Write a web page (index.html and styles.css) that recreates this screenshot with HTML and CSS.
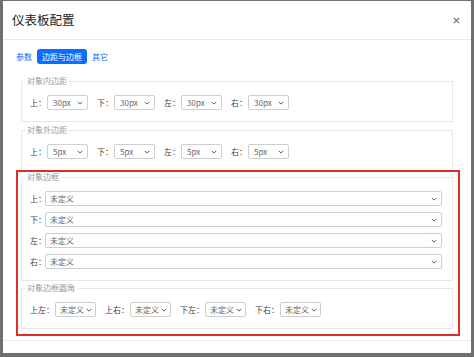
FILE: index.html
```html
<!DOCTYPE html>
<html lang="zh-CN">
<head>
    <meta charset="UTF-8">
    <title>仪表板配置</title>
    <link rel="stylesheet" href="styles.css">
</head>
<body>
    <div class="modal">
        <div class="modal-header">
            <span class="modal-title">仪表板配置</span>
            <span class="close">
                <svg viewBox="0 0 8 8" width="7" height="7"><path d="M1 1l6 6M7 1l-6 6" stroke="#666" stroke-width="1.2" fill="none"/></svg>
            </span>
        </div>
        <div class="modal-body">
            <div class="tabs">
                <a class="tab">参数</a>
                <a class="tab active">边距与边框</a>
                <a class="tab">其它</a>
            </div>

            <!-- 内边距 -->
            <fieldset class="group">
                <legend>对象内边距</legend>
                <div class="row">
                    <label>上：</label>
                    <div class="sel"><span>30px</span><svg viewBox="0 0 8 5" width="6" height="4"><path d="M1 1l3 3 3-3" fill="none" stroke="#555" stroke-width="1.3"/></svg></div>
                    <label>下：</label>
                    <div class="sel"><span>30px</span><svg viewBox="0 0 8 5" width="6" height="4"><path d="M1 1l3 3 3-3" fill="none" stroke="#555" stroke-width="1.3"/></svg></div>
                    <label>左：</label>
                    <div class="sel"><span>30px</span><svg viewBox="0 0 8 5" width="6" height="4"><path d="M1 1l3 3 3-3" fill="none" stroke="#555" stroke-width="1.3"/></svg></div>
                    <label>右：</label>
                    <div class="sel"><span>30px</span><svg viewBox="0 0 8 5" width="6" height="4"><path d="M1 1l3 3 3-3" fill="none" stroke="#555" stroke-width="1.3"/></svg></div>
                </div>
            </fieldset>

            <!-- 外边距 -->
            <fieldset class="group">
                <legend>对象外边距</legend>
                <div class="row">
                    <label>上：</label>
                    <div class="sel"><span>5px</span><svg viewBox="0 0 8 5" width="6" height="4"><path d="M1 1l3 3 3-3" fill="none" stroke="#555" stroke-width="1.3"/></svg></div>
                    <label>下：</label>
                    <div class="sel"><span>5px</span><svg viewBox="0 0 8 5" width="6" height="4"><path d="M1 1l3 3 3-3" fill="none" stroke="#555" stroke-width="1.3"/></svg></div>
                    <label>左：</label>
                    <div class="sel"><span>5px</span><svg viewBox="0 0 8 5" width="6" height="4"><path d="M1 1l3 3 3-3" fill="none" stroke="#555" stroke-width="1.3"/></svg></div>
                    <label>右：</label>
                    <div class="sel"><span>5px</span><svg viewBox="0 0 8 5" width="6" height="4"><path d="M1 1l3 3 3-3" fill="none" stroke="#555" stroke-width="1.3"/></svg></div>
                </div>
            </fieldset>

            <!-- 标红区域：边框 + 圆角 -->
            <div class="highlight">
                <fieldset class="group">
                    <legend>对象边框</legend>
                    <div class="rows">
                        <div class="row wide">
                            <label>上：</label>
                            <div class="sel"><span>未定义</span><svg viewBox="0 0 8 5" width="6" height="4"><path d="M1 1l3 3 3-3" fill="none" stroke="#555" stroke-width="1.3"/></svg></div>
                        </div>
                        <div class="row wide">
                            <label>下：</label>
                            <div class="sel"><span>未定义</span><svg viewBox="0 0 8 5" width="6" height="4"><path d="M1 1l3 3 3-3" fill="none" stroke="#555" stroke-width="1.3"/></svg></div>
                        </div>
                        <div class="row wide">
                            <label>左：</label>
                            <div class="sel"><span>未定义</span><svg viewBox="0 0 8 5" width="6" height="4"><path d="M1 1l3 3 3-3" fill="none" stroke="#555" stroke-width="1.3"/></svg></div>
                        </div>
                        <div class="row wide">
                            <label>右：</label>
                            <div class="sel"><span>未定义</span><svg viewBox="0 0 8 5" width="6" height="4"><path d="M1 1l3 3 3-3" fill="none" stroke="#555" stroke-width="1.3"/></svg></div>
                        </div>
                    </div>
                </fieldset>

                <fieldset class="group">
                    <legend>对象边框圆角</legend>
                    <div class="row corner">
                        <label>上左：</label>
                        <div class="sel"><span>未定义</span><svg viewBox="0 0 8 5" width="6" height="4"><path d="M1 1l3 3 3-3" fill="none" stroke="#555" stroke-width="1.3"/></svg></div>
                        <label>上右：</label>
                        <div class="sel"><span>未定义</span><svg viewBox="0 0 8 5" width="6" height="4"><path d="M1 1l3 3 3-3" fill="none" stroke="#555" stroke-width="1.3"/></svg></div>
                        <label>下左：</label>
                        <div class="sel"><span>未定义</span><svg viewBox="0 0 8 5" width="6" height="4"><path d="M1 1l3 3 3-3" fill="none" stroke="#555" stroke-width="1.3"/></svg></div>
                        <label>下右：</label>
                        <div class="sel"><span>未定义</span><svg viewBox="0 0 8 5" width="6" height="4"><path d="M1 1l3 3 3-3" fill="none" stroke="#555" stroke-width="1.3"/></svg></div>
                    </div>
                </fieldset>
            </div>
        </div>
        <div class="modal-footer"></div>
    </div>
</body>
</html>
```

FILE: styles.css
```css
* {
    margin: 0;
    padding: 0;
    box-sizing: border-box;
}
html, body {
    height: 100%;
}
body {
    background: #6f6f6f;
    overflow: hidden;
    font-family: "Noto Sans CJK SC", "Noto Sans", sans-serif;
    color: #333;
}
.modal {
    width: 468px;
    height: 352px;
    margin: 1px 3px 0;
    background: #fff;
    display: flex;
    flex-direction: column;
}
.modal-header {
    height: 39px;
    border-bottom: 1px solid #e9e9e9;
    display: flex;
    align-items: center;
    justify-content: space-between;
    padding: 0 11px 0 9px;
}
.modal-title {
    font-size: 12.5px;
    line-height: 16px;
    color: #222;
}
.close {
    display: flex;
}
.modal-body {
    padding: 9px 18px 4px;
}
.tabs {
    display: flex;
    margin-left: -10px;
    margin-bottom: 12px;
}
.tab {
    font-size: 8px;
    line-height: 15px;
    height: 15px;
    padding: 0 5px;
    color: #0d6efd;
    border-radius: 3px;
}
.tab.active {
    background: #0d6efd;
    color: #fff;
}
.group {
    border: 1px solid #e8e8e8;
    margin: 0;
    min-width: 0;
    padding: 9px 8px 11px;
}
.group + .group {
    margin-top: 3px;
}
.highlight .group + .group {
    margin-top: 2px;
}
.group legend {
    font-size: 8px;
    line-height: 10px;
    color: #999;
    padding: 0 2px;
    margin-left: -5px;
}
.row {
    display: flex;
    align-items: center;
    height: 15px;
}
.row label {
    font-size: 8px;
    line-height: 15px;
    color: #444;
    margin-right: 1px;
}
.sel {
    width: 41px;
    height: 15px;
    border: 1px solid #cfcfcf;
    border-radius: 2px;
    display: flex;
    align-items: center;
    justify-content: space-between;
    padding: 0 4px 0 5px;
    margin-right: 9px;
    font-size: 8px;
    color: #666;
}
.sel span {
    line-height: 13px;
}
.row.corner .sel {
    padding: 0 3px 0 4px;
}
.rows {
    display: flex;
    flex-direction: column;
    gap: 6px;
}
.row.wide label {
    margin-right: -1px;
}
.row.wide .sel {
    flex: 1;
    margin-right: 2px;
    padding-left: 4px;
}
.highlight {
    margin: -1px -7px 0 -5px;
    padding: 0 5px 5px 3px;
    border: 2px solid #dc2f2a;
}
.modal-footer {
    flex: 1;
    border-top: 1px solid #ececec;
}
```
